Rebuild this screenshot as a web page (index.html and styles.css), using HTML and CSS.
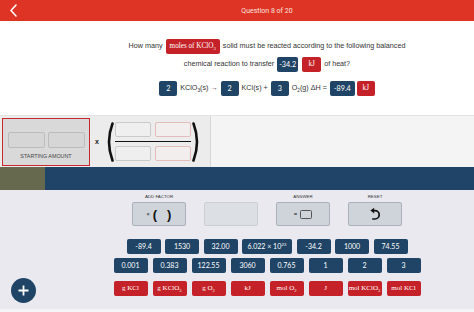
FILE: index.html
```html
<!DOCTYPE html>
<html>
<head>
<meta charset="utf-8">
<link rel="stylesheet" href="styles.css">
</head>
<body>
<div class="app">
  <header class="topbar">
    <div class="back">
      <svg width="9" height="13" viewBox="0 0 9 13"><path d="M7 1 L2 6.5 L7 12" fill="none" stroke="#fff" stroke-width="1.6" stroke-linecap="round" stroke-linejoin="round"/></svg>
    </div>
    <div class="title">Question 8 of 20</div>
  </header>

  <section class="question">
    <p class="q-text">How many <span class="tile unit wide">moles of KClO<sub>3</sub></span> solid must be reacted according to the following balanced<br>chemical reaction to transfer <span class="tile num w21">-34.2</span> <span class="tile unit w19">kJ</span> of heat?</p>
    <p class="eq"><span class="tile num sq">2</span> KClO<sub>3</sub>(s) → <span class="tile num sq">2</span> KCl(s) + <span class="tile num sq">3</span> O<sub>2</sub>(g) ΔH = <span class="tile num">-89.4</span><span class="tile unit sq">kJ</span></p>
  </section>

  <section class="work">
    <div class="work-left">
      <div class="start-box">
        <div class="slots">
          <div class="slot"></div>
          <div class="slot"></div>
        </div>
        <div class="start-label">STARTING AMOUNT</div>
      </div>
      <div class="times">x</div>
      <svg class="paren first" width="9" height="40" viewBox="0 0 9 40"><path d="M7.5 1.5 Q0.5 20 7.5 38.5" fill="none" stroke="#111" stroke-width="2.6" stroke-linecap="round"/></svg>
      <div class="fraction">
        <div class="fslot"></div>
        <div class="fslot red"></div>
        <div class="fline"></div>
        <div class="fslot"></div>
        <div class="fslot red"></div>
      </div>
      <svg class="paren" width="9" height="40" viewBox="0 0 9 40"><path d="M1.5 1.5 Q8.5 20 1.5 38.5" fill="none" stroke="#111" stroke-width="2.6" stroke-linecap="round"/></svg>
    </div>
    <div class="work-right"></div>
  </section>

  <div class="progress"><div class="progress-fill"></div></div>

  <section class="panel">
    <div class="fab-col">
      <div class="fab">
        <svg width="11" height="11" viewBox="0 0 11 11"><path d="M5.5 0.5 V10.5 M0.5 5.5 H10.5" stroke="#fff" stroke-width="1.8"/></svg>
      </div>
    </div>
    <div class="controls">
      <div class="actions">
        <div class="action">
          <div class="alabel">ADD FACTOR</div>
          <div class="abtn"><span class="small-x">×</span><span class="bparen">(</span><span class="bparen gap">)</span></div>
        </div>
        <div class="action">
          <div class="alabel"></div>
          <div class="abtn flat"></div>
        </div>
        <div class="action">
          <div class="alabel">ANSWER</div>
          <div class="abtn"><span class="eqs">=</span><span class="ansbox"></span></div>
        </div>
        <div class="action">
          <div class="alabel">RESET</div>
          <div class="abtn">
            <svg width="10" height="14" viewBox="0 0 10 14"><path d="M3.6 3.6 H5 A4.2 4.2 0 0 1 5 12 H2.2" fill="none" stroke="#111" stroke-width="1.7"/><path d="M0.4 3.6 L4.2 0.8 V6.4 Z" fill="#111"/></svg>
          </div>
        </div>
      </div>

      <div class="row r1">
        <span class="tile num t">-89.4</span>
        <span class="tile num t">1530</span>
        <span class="tile num t">32.00</span>
        <span class="tile num t big">6.022 × 10<sup>23</sup></span>
        <span class="tile num t">-34.2</span>
        <span class="tile num t">1000</span>
        <span class="tile num t">74.55</span>
      </div>
      <div class="row r2">
        <span class="tile num t">0.001</span>
        <span class="tile num t">0.383</span>
        <span class="tile num t">122.55</span>
        <span class="tile num t">3060</span>
        <span class="tile num t">0.765</span>
        <span class="tile num t">1</span>
        <span class="tile num t">2</span>
        <span class="tile num t">3</span>
      </div>
      <div class="row r3">
        <span class="tile unit t">g KCl</span>
        <span class="tile unit t">g KClO<sub>3</sub></span>
        <span class="tile unit t">g O<sub>2</sub></span>
        <span class="tile unit t">kJ</span>
        <span class="tile unit t">mol O<sub>2</sub></span>
        <span class="tile unit t">J</span>
        <span class="tile unit t">mol KClO<sub>3</sub></span>
        <span class="tile unit t">mol KCl</span>
      </div>
    </div>
  </section>
</div>
</body>
</html>
```

FILE: styles.css
```css
* { box-sizing: border-box; margin: 0; padding: 0; }
html, body { width: 474px; height: 312px; overflow: hidden; background: #fff; }
body { font-family: "Liberation Sans", Arial, sans-serif; color: #333; }

.app { display: flex; flex-direction: column; height: 312px; }

.topbar {
  height: 21px; flex: none;
  background: #dd3426;
  display: grid; grid-template-columns: 60px 1fr;
  align-items: center;
}
.back { padding-left: 9px; display: flex; align-items: center; }
.title {
  text-align: center; color: #fbe3df;
  font-family: Roboto, sans-serif; font-size: 7px;
}

.question {
  height: 94px; flex: none;
  padding: 16px 0 0 60px;
  text-align: center;
  font-size: 7.2px; line-height: 18px; color: #333;
}
.eq { margin-top: 6px; }

.tile {
  display: inline-block; vertical-align: middle;
  height: 15px; line-height: 15px;
  padding: 0 4px; margin: 0 1px;
  border-radius: 2px; color: #fff;
  text-align: center;
}
.tile.num { background: #1f4466; font-family: Lato, sans-serif; }
.tile.unit { background: #c52128; font-family: "Liberation Serif", serif; }
.tile.sq { width: 18px; padding: 0; }
.tile.w21 { width: 21px; padding: 0; }
.tile.w19 { width: 19px; padding: 0; }
.tile sub, .tile sup { font-size: 65%; line-height: 0; }
.q-text sub, .eq sub { font-size: 65%; line-height: 0; }

.work {
  height: 52px; flex: none;
  display: flex;
  background: #f4f4f4;
  border-top: 1px solid #e3e3e3;
}
.work-left {
  width: 211px;
  background: #ececec;
  border-right: 1px solid #d7d7d7;
  display: flex; align-items: center;
  padding-left: 2px;
}
.start-box {
  width: 88px; height: 48px;
  border: 1.5px solid #c8282e;
  background: #d9d9d9;
  display: flex; flex-direction: column; align-items: center;
  padding-top: 13.5px;
}
.slots { display: flex; gap: 3px; }
.slot {
  width: 37px; height: 16px;
  background: #d6d6d6; border: 1px solid #bdbdbd; border-radius: 2px;
}
.start-label {
  margin-top: 4px; font-size: 5.4px; line-height: 8px; color: #444;
}
.times { margin-left: 5px; font-size: 7px; font-weight: bold; color: #222; }
.paren { flex: none; }
.paren.first { margin-left: 6px; }
.fraction {
  display: grid;
  grid-template-columns: 36px 36px;
  grid-template-rows: 15px 9px 15px;
  column-gap: 4px;
  margin: 0 1px;
}
.fslot { background: #efefef; border: 1px solid #cacaca; border-radius: 2px; }
.fslot.red { background: #f3eeee; border-color: #e3bcbc; }
.fline {
  grid-column: 1 / span 2;
  align-self: center;
  height: 1.5px; background: #111;
}
.work-right { flex: 1; }

.progress { height: 23px; flex: none; background: #1f4467; display: flex; }
.progress-fill { width: 45px; background: #67694f; }

.panel {
  flex: 1;
  background: #e9e9ef;
  display: grid; grid-template-columns: 60px 1fr;
  border-bottom: 3px solid #f4f4f7;
}
.fab-col { display: flex; align-items: flex-end; padding: 0 0 6px 11px; }
.fab {
  width: 25px; height: 25px; border-radius: 50%;
  background: #1f4466;
  display: flex; align-items: center; justify-content: center;
}
.controls { display: flex; flex-direction: column; align-items: center; }
.actions {
  display: grid;
  grid-template-columns: repeat(4, 54px);
  column-gap: 18px;
  padding-top: 3px;
}
.alabel {
  height: 8px; line-height: 8px;
  font-size: 4.4px; color: #333; text-align: center;
}
.abtn {
  margin-top: 1px;
  height: 24px;
  background: #cfd4db;
  border: 1px solid #aab2bb;
  border-radius: 2px;
  display: flex; align-items: center; justify-content: center;
  color: #111;
}
.abtn.flat { background: #dcdfe4; border-color: #cbcfd5; }
.small-x { font-size: 5.5px; margin-right: 3px; }
.bparen { font-size: 13px; font-weight: bold; line-height: 1; }
.bparen.gap { margin-left: 10px; }
.eqs { font-size: 6px; margin-right: 3px; }
.ansbox {
  width: 12px; height: 9px;
  border: 1px solid #555; border-radius: 1.5px;
}

.row { display: flex; gap: 5px; justify-content: center; }
.r1 { margin-top: 13px; gap: 4.5px; }
.r2 { margin-top: 4px; }
.r3 { margin-top: 8px; }
.tile.t {
  width: 34px; padding: 0; margin: 0;
  font-size: 7px;
}
.tile.t.big { width: 50px; }
```
